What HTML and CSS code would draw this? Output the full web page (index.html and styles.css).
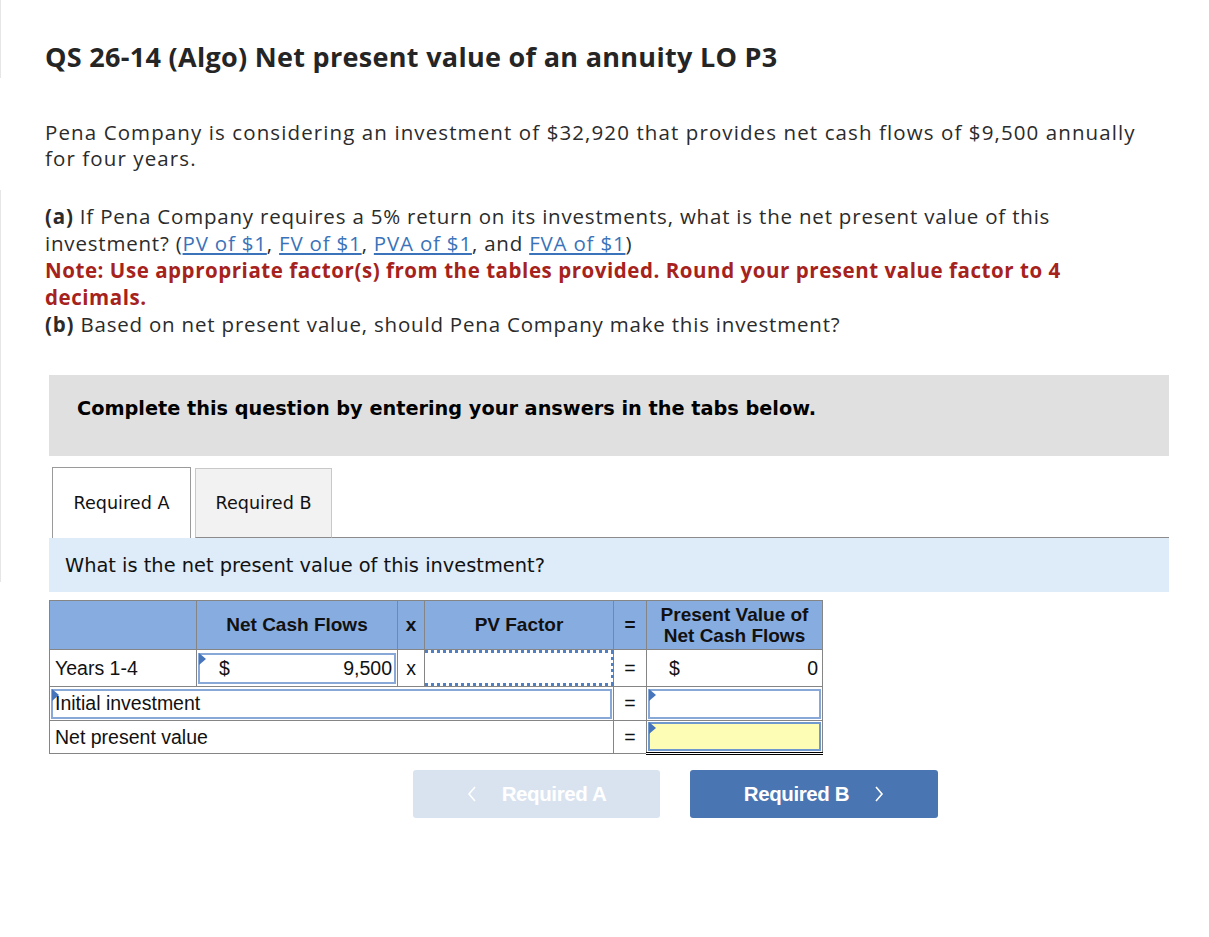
FILE: index.html
```html
<!DOCTYPE html>
<html lang="en">
<head>
<meta charset="utf-8">
<title>QS 26-14 (Algo) Net present value of an annuity LO P3</title>
<link rel="stylesheet" href="styles.css">
</head>
<body>
<div class="edge edge-top"></div>
<div class="edge edge-mid"></div>
<main class="page">
  <h1 class="title">QS 26-14 (Algo) Net present value of an annuity LO P3</h1>

  <p class="intro">Pena Company is considering an investment of $32,920 that provides net cash flows of $9,500 annually for four years.</p>

  <div class="question">
    <p class="line"><b>(a)</b> If Pena Company requires a 5% return on its investments, what is the net present value of this investment? (<a href="#">PV of $1</a>, <a href="#">FV of $1</a>, <a href="#">PVA of $1</a>, and <a href="#">FVA of $1</a>)</p>
    <p class="note">Note: Use appropriate factor(s) from the tables provided. Round your present value factor to 4 decimals.</p>
    <p class="line"><b>(b)</b> Based on net present value, should Pena Company make this investment?</p>
  </div>

  <div class="instructions">Complete this question by entering your answers in the tabs below.</div>

  <div class="tabs">
    <div class="tab tab-active">Required A</div>
    <div class="tab tab-inactive">Required B</div>
    <div class="tab-rest"></div>
  </div>

  <div class="prompt">What is the net present value of this investment?</div>

  <table class="grid">
    <colgroup>
      <col class="c-label"><col class="c-ncf"><col class="c-x"><col class="c-pv"><col class="c-eq"><col class="c-res">
    </colgroup>
    <thead>
      <tr>
        <th></th>
        <th>Net Cash Flows</th>
        <th>x</th>
        <th>PV Factor</th>
        <th>=</th>
        <th class="th-two">Present Value of<br>Net Cash Flows</th>
      </tr>
    </thead>
    <tbody>
      <tr class="r1">
        <td class="label">Years 1-4</td>
        <td class="cell-input"><div class="field field-money"><span class="flag"></span><span>$</span><span>9,500</span></div></td>
        <td class="op">x</td>
        <td class="cell-input"><div class="field-dotted"></div></td>
        <td class="op">=</td>
        <td class="money"><span>$</span><span>0</span></td>
      </tr>
      <tr class="r2">
        <td colspan="4" class="cell-input"><div class="field field-text"><span class="flag"></span>Initial investment</div></td>
        <td class="op">=</td>
        <td class="cell-input"><div class="field field-res"><span class="flag"></span></div></td>
      </tr>
      <tr class="r3">
        <td colspan="4" class="label">Net present value</td>
        <td class="op">=</td>
        <td class="cell-input cell-total"><div class="field field-yellow"><span class="flag"></span></div></td>
      </tr>
    </tbody>
  </table>

  <div class="nav">
    <button class="btn btn-prev" type="button"><svg class="chev-svg" width="10" height="16" viewBox="0 0 10 16"><path d="M8 1 L2 8 L8 15" fill="none" stroke="#fff" stroke-width="1.6"/></svg>Required A</button>
    <button class="btn btn-next" type="button">Required B<svg class="chev-svg chev-r" width="10" height="16" viewBox="0 0 10 16"><path d="M2 1 L8 8 L2 15" fill="none" stroke="#fff" stroke-width="1.6"/></svg></button>
  </div>
</main>
</body>
</html>
```

FILE: styles.css
```css
* { box-sizing: border-box; }

html, body {
  margin: 0;
  padding: 0;
  background: #ffffff;
}

body {
  font-family: "Open Sans", Lato, Arial, sans-serif;
  color: #2b2b2b;
  position: relative;
}

.edge {
  position: absolute;
  left: 0;
  width: 1px;
  background: #e6e6e6;
}
.edge-top { top: 0; height: 78px; }
.edge-mid { top: 190px; height: 392px; }

.page {
  padding: 40px 0 0 45px;
  width: 1169px;
}

.title {
  margin: 0;
  font-size: 27px;
  line-height: 34px;
  font-weight: 700;
  letter-spacing: 0.3px;
  color: #252525;
}

.intro {
  margin: 45px 0 0 0;
  font-size: 20.5px;
  line-height: 26px;
  letter-spacing: 1.1px;
  width: 1112px;
}

.question {
  margin-top: 32px;
  font-size: 20.5px;
  line-height: 27px;
  letter-spacing: 0.8px;
  width: 1112px;
}
.question p { margin: 0; }
.question b { font-weight: 700; }
.question a {
  color: #3a73b9;
  text-decoration: underline;
  text-underline-offset: 2px;
}
.note {
  color: #a6221c;
  font-weight: 700;
  letter-spacing: 0.55px;
}

.instructions {
  margin: 37px 0 0 4px;
  height: 81px;
  background: #e0e0e0;
  padding: 22px 0 0 28px;
  font-family: "DejaVu Sans", Verdana, sans-serif;
  font-weight: 700;
  font-size: 19.3px;
  line-height: 24px;
  color: #000;
}

.tabs {
  margin: 11px 0 0 4px;
  display: flex;
  align-items: flex-end;
  height: 71px;
}
.tab {
  height: 70px;
  display: flex;
  align-items: center;
  justify-content: center;
  font-family: "DejaVu Sans", Verdana, sans-serif;
  font-size: 17.6px;
  color: #111;
}
.tab-active {
  margin-left: 3px;
  width: 139px;
  height: 71px;
  background: #fff;
  border: 1px solid #9a9a9a;
  border-bottom: none;
}
.tab-inactive {
  margin-left: 4px;
  width: 137px;
  background: #f2f2f2;
  border: 1px solid #c8c8c8;
  border-bottom: 1px solid #8c8c8c;
}
.tab-rest {
  flex: 1;
  border-bottom: 1px solid #8c8c8c;
}

.prompt {
  margin-left: 4px;
  height: 54px;
  background: #deebf8;
  padding: 17px 0 0 16px;
  font-family: "DejaVu Sans", Verdana, sans-serif;
  font-size: 19.4px;
  line-height: 22px;
  color: #111;
}

.grid {
  margin: 8px 0 0 4px;
  border-collapse: collapse;
  table-layout: fixed;
  width: 773px;
  font-family: "Liberation Sans", Arial, sans-serif;
  font-size: 19.5px;
  color: #111;
}
.c-label { width: 147px; }
.c-ncf { width: 201px; }
.c-x { width: 27px; }
.c-pv { width: 189px; }
.c-eq { width: 33px; }
.c-res { width: 176px; }

.grid th, .grid td {
  border: 1px solid #858585;
  padding: 0;
}
.grid th {
  background: #86ace0;
  height: 49px;
  font-weight: 700;
  font-size: 19px;
  line-height: 22px;
  text-align: center;
  vertical-align: middle;
}
.grid th.th-two { line-height: 21px; }

.r1 td { height: 35px; }
.r2 td { height: 34px; }
.r3 td { height: 33px; }

.label {
  padding-left: 5px !important;
  text-align: left;
}
.op { text-align: center; }

.cell-input { position: relative; }

.field {
  position: relative;
  border: 2px solid #88a8d8;
  margin: 1px;
  display: flex;
  align-items: center;
}
.r1 .field { height: 31px; }
.r2 .field { height: 30px; }
.r3 .field { height: 29px; }

.field-money {
  justify-content: space-between;
  padding: 0 2px 0 19px;
}
.field-text {
  padding-left: 2px;
}
.field-yellow {
  background: #fefdb5;
  border-color: #6f98cf;
}
.cell-total {
  border-bottom: 3px double #000 !important;
}

.flag {
  position: absolute;
  left: -1px;
  top: -2px;
  width: 0;
  height: 0;
  border-top: 6px solid transparent;
  border-bottom: 6px solid transparent;
  border-left: 7px solid #4775bb;
}

.field-dotted {
  margin: 0 -1px 0 0;
  height: 36px;
  border: 3px dotted #4f80c6;
  border-left: none;
}

.money {
  padding: 0 4px 0 22px !important;
}
.money span:first-child { float: left; }
.money span:last-child { float: right; }

.nav {
  display: flex;
  gap: 30px;
  margin: 15px 0 0 368px;
}
.btn {
  width: 247px;
  height: 48px;
  border: none;
  border-radius: 3px;
  font-family: "Liberation Sans", Arial, sans-serif;
  font-weight: 700;
  font-size: 20.5px;
  color: #fff;
  display: flex;
  align-items: center;
  justify-content: center;
  letter-spacing: -0.4px;
  padding: 0;
}
.btn-prev {
  background: #d9e3ef;
}
.btn-next {
  width: 248px;
  background: #4a75b3;
}
.chev-svg {
  margin-right: 25px;
}
.chev-r {
  margin-right: 0;
  margin-left: 25px;
}
```
